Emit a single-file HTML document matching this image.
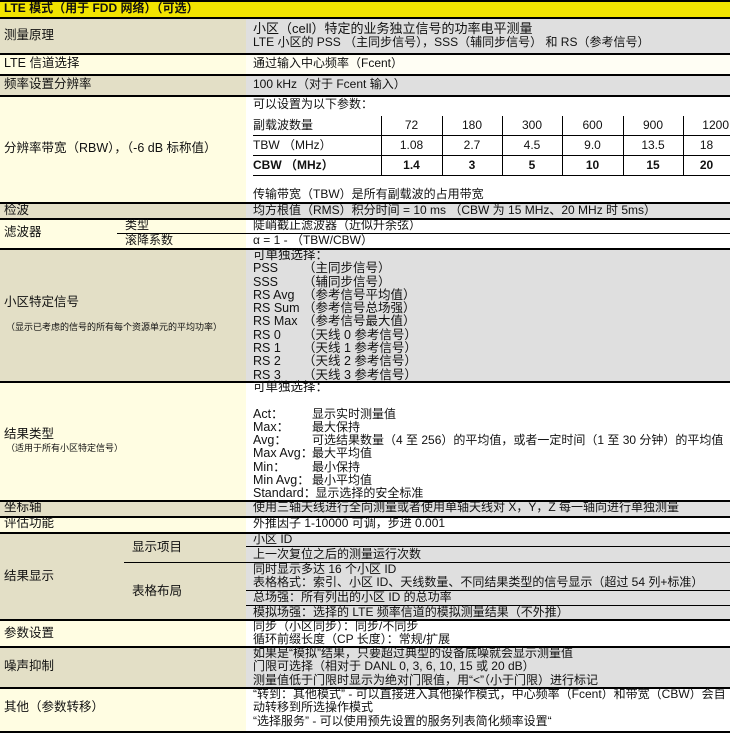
<!DOCTYPE html>
<html><head><meta charset="utf-8"><style>
*{margin:0;padding:0;box-sizing:border-box}
body{width:730px;height:733px;position:relative;background:#fff;font-family:"Liberation Sans","Noto Sans CJK SC",sans-serif;font-size:12px;color:#111;overflow:hidden}
div{position:absolute}
.h{left:0;width:730px;height:1.5px;background:#000}
.t{white-space:nowrap;line-height:13.3px}
.g{background:#e3dfc6}.y{background:#fffde2}.rg{background:#dfdfdf}.rw{background:#fff}
.b{font-weight:bold}
.vl{width:1px;background:#000;top:116px;height:59px}
.tl{left:253px;width:477px;height:1px;background:#000}
</style></head><body>
<div style="left:0;top:0;width:730px;height:17px;background:#f2e400"></div>
<div class="t b" style="left:4px;top:2px">LTE 模式（用于 FDD 网络）（可选）</div>

<div class="g" style="left:0;top:17px;width:246px;height:36px"></div><div class="rg" style="left:246px;top:17px;width:484px;height:36px"></div>
<div class="y" style="left:0;top:53px;width:246px;height:21px"></div><div class="rw" style="left:246px;top:53px;width:484px;height:21px;background:#fffef4"></div>
<div class="g" style="left:0;top:74px;width:246px;height:21px"></div><div class="rg" style="left:246px;top:74px;width:484px;height:21px"></div>
<div class="y" style="left:0;top:95px;width:246px;height:107px"></div>
<div class="g" style="left:0;top:202px;width:246px;height:17px"></div><div class="rg" style="left:246px;top:202px;width:484px;height:17px"></div>
<div class="y" style="left:0;top:219px;width:246px;height:29px"></div>
<div class="g" style="left:0;top:248px;width:246px;height:133px"></div><div class="rg" style="left:246px;top:248px;width:484px;height:133px"></div>
<div class="y" style="left:0;top:381px;width:246px;height:119px"></div>
<div class="g" style="left:0;top:500px;width:246px;height:16px"></div><div class="rg" style="left:246px;top:500px;width:484px;height:16px"></div>
<div class="y" style="left:0;top:516px;width:246px;height:16px"></div>
<div class="g" style="left:0;top:532px;width:246px;height:87px"></div><div class="rg" style="left:246px;top:532px;width:484px;height:87px"></div>
<div class="y" style="left:0;top:619px;width:246px;height:27px"></div>
<div class="g" style="left:0;top:646px;width:246px;height:41px"></div><div class="rg" style="left:246px;top:646px;width:484px;height:41px"></div>
<div class="y" style="left:0;top:687px;width:246px;height:46px"></div>

<div class="h" style="top:0"></div><div class="h" style="top:17px"></div><div class="h" style="top:53px"></div><div class="h" style="top:74px"></div><div class="h" style="top:95px"></div><div class="h" style="top:202px"></div><div class="h" style="top:218px"></div><div class="h" style="top:248px"></div><div class="h" style="top:381px"></div><div class="h" style="top:500px"></div><div class="h" style="top:516px"></div><div class="h" style="top:532px"></div><div class="h" style="top:619px"></div><div class="h" style="top:646px"></div><div class="h" style="top:687px"></div><div class="h" style="top:731px"></div>
<div class="h" style="top:233px;left:117px;width:613px;height:1px"></div>
<div class="h" style="top:546px;left:246px;width:484px;height:1px"></div>
<div class="h" style="top:562px;left:124px;width:606px;height:1px"></div>
<div class="h" style="top:590px;left:246px;width:484px;height:1px"></div>
<div class="h" style="top:605px;left:246px;width:484px;height:1px"></div>

<div class="t" style="left:4px;top:29px;font-size:12.5px">测量原理</div>
<div class="t" style="left:253px;top:22px"><span style="font-size:13px">小区（cell）特定的业务独立信号的功率电平测量</span><br>LTE 小区的 PSS （主同步信号），SSS（辅同步信号） 和 RS（参考信号）</div>
<div class="t" style="left:4px;top:57px;font-size:12.5px">LTE 信道选择</div><div class="t" style="left:253px;top:57px">通过输入中心频率（Fcent）</div>
<div class="t" style="left:4px;top:78px;font-size:12.5px">频率设置分辨率</div><div class="t" style="left:253px;top:78px">100 kHz（对于 Fcent 输入）</div>

<div class="t" style="left:4px;top:142px;font-size:12.5px">分辨率带宽（RBW），（-6 dB 标称值）</div>
<div class="t" style="left:253px;top:98px">可以设置为以下参数：</div>
<div class="tl" style="top:135px"></div><div class="tl" style="top:155px"></div><div class="tl" style="top:175px"></div>
<div class="vl" style="left:381px"></div><div class="vl" style="left:442px"></div><div class="vl" style="left:502px"></div><div class="vl" style="left:562px"></div><div class="vl" style="left:623px"></div><div class="vl" style="left:683px"></div>
<div class="t" style="left:253px;top:119px">副载波数量</div>
<div class="t" style="left:253px;top:139px">TBW （MHz）</div>
<div class="t b" style="left:253px;top:159px">CBW （MHz）</div>
<div style="left:381px;top:119px;width:349px;display:flex" class="t"><span style="width:61px;text-align:center">72</span><span style="width:60px;text-align:center">180</span><span style="width:60px;text-align:center">300</span><span style="width:61px;text-align:center">600</span><span style="width:60px;text-align:center">900</span><span style="width:46px;text-align:right">1200</span></div>
<div style="left:381px;top:139px;width:349px;display:flex" class="t"><span style="width:61px;text-align:center">1.08</span><span style="width:60px;text-align:center">2.7</span><span style="width:60px;text-align:center">4.5</span><span style="width:61px;text-align:center">9.0</span><span style="width:60px;text-align:center">13.5</span><span style="width:47px;text-align:center">18</span></div>
<div style="left:381px;top:159px;width:349px;display:flex" class="t b"><span style="width:61px;text-align:center">1.4</span><span style="width:60px;text-align:center">3</span><span style="width:60px;text-align:center">5</span><span style="width:61px;text-align:center">10</span><span style="width:60px;text-align:center">15</span><span style="width:47px;text-align:center">20</span></div>
<div class="t" style="left:253px;top:188px">传输带宽（TBW）是所有副载波的占用带宽</div>

<div class="t" style="left:4px;top:204px;font-size:12.5px">检波</div><div class="t" style="left:253px;top:204px">均方根值（RMS）积分时间 = 10 ms （CBW 为 15 MHz、20 MHz 时 5ms）</div>
<div class="t" style="left:4px;top:226px;font-size:12.5px">滤波器</div>
<div class="t" style="left:125px;top:219px">类型</div><div class="t" style="left:253px;top:219px">陡峭截止滤波器（近似升余弦）</div>
<div class="t" style="left:125px;top:234px">滚降系数</div><div class="t" style="left:253px;top:234px">α = 1 - （TBW/CBW）</div>

<div class="t" style="left:4px;top:296px;font-size:12.5px">小区特定信号</div>
<div class="t" style="left:6px;top:321px;font-size:9px">（显示已考虑的信号的所有每个资源单元的平均功率）</div>
<div class="t" style="left:253px;top:249px;font-size:12.5px">可单独选择：<br>PSS<br>SSS<br>RS Avg<br>RS Sum<br>RS Max<br>RS 0<br>RS 1<br>RS 2<br>RS 3</div>
<div class="t" style="left:303px;top:249px;font-size:12.5px"><br>（主同步信号）<br>（辅同步信号）<br>（参考信号平均值）<br>（参考信号总场强）<br>（参考信号最大值）<br>（天线 0 参考信号）<br>（天线 1 参考信号）<br>（天线 2 参考信号）<br>（天线 3 参考信号）</div>

<div class="t" style="left:4px;top:428px;font-size:12.5px">结果类型</div>
<div class="t" style="left:6px;top:442px;font-size:9px">（适用于所有小区特定信号）</div>
<div class="t" style="left:253px;top:381px;font-size:12.5px">可单独选择：<br><br>Act：<br>Max：<br>Avg：<br>Max Avg：<br>Min：<br>Min Avg：<br>Standard：</div>
<div class="t" style="left:312px;top:381px"><br><br>显示实时测量值<br>最大保持<br>可选结果数量（4 至 256）的平均值，或者一定时间（1 至 30 分钟）的平均值<br>最大平均值<br>最小保持<br>最小平均值<br>&nbsp;显示选择的安全标准</div>

<div class="t" style="left:4px;top:501px;font-size:12.5px">坐标轴</div><div class="t" style="left:253px;top:501px">使用三轴天线进行全向测量或者使用单轴天线对 X，Y，Z 每一轴向进行单独测量</div>
<div class="t" style="left:4px;top:517px;font-size:12.5px">评估功能</div><div class="t" style="left:253px;top:517px">外推因子 1-10000 可调，步进 0.001</div>
<div class="t" style="left:4px;top:570px;font-size:12.5px">结果显示</div>
<div class="t" style="left:132px;top:541px;font-size:12.5px">显示项目</div><div class="t" style="left:132px;top:585px;font-size:12.5px">表格布局</div>
<div class="t" style="left:253px;top:533px">小区 ID</div>
<div class="t" style="left:253px;top:548px">上一次复位之后的测量运行次数</div>
<div class="t" style="left:253px;top:563px">同时显示多达 16 个小区 ID<br>表格格式：索引、小区 ID、天线数量、不同结果类型的信号显示（超过 54 列+标准）</div>
<div class="t" style="left:253px;top:591px">总场强：所有列出的小区 ID 的总功率</div>
<div class="t" style="left:253px;top:606px">模拟场强：选择的 LTE 频率信道的模拟测量结果（不外推）</div>

<div class="t" style="left:4px;top:627px;font-size:12.5px">参数设置</div>
<div class="t" style="left:253px;top:620px">同步（小区同步）：同步/不同步<br>循环前缀长度（CP 长度）：常规/扩展</div>
<div class="t" style="left:4px;top:660px;font-size:12.5px">噪声抑制</div>
<div class="t" style="left:253px;top:647px">如果是“模拟”结果，只要超过典型的设备底噪就会显示测量值<br>门限可选择（相对于 DANL 0, 3, 6, 10, 15 或 20 dB）<br>测量值低于门限时显示为绝对门限值，用“&lt;”（小于门限）进行标记</div>
<div class="t" style="left:4px;top:701px;font-size:12.5px">其他（参数转移）</div>
<div class="t" style="left:253px;top:688px">“转到：其他模式” - 可以直接进入其他操作模式，中心频率（Fcent）和带宽（CBW）会自<br>动转移到所选操作模式<br>“选择服务” - 可以使用预先设置的服务列表简化频率设置“</div>
</body></html>
